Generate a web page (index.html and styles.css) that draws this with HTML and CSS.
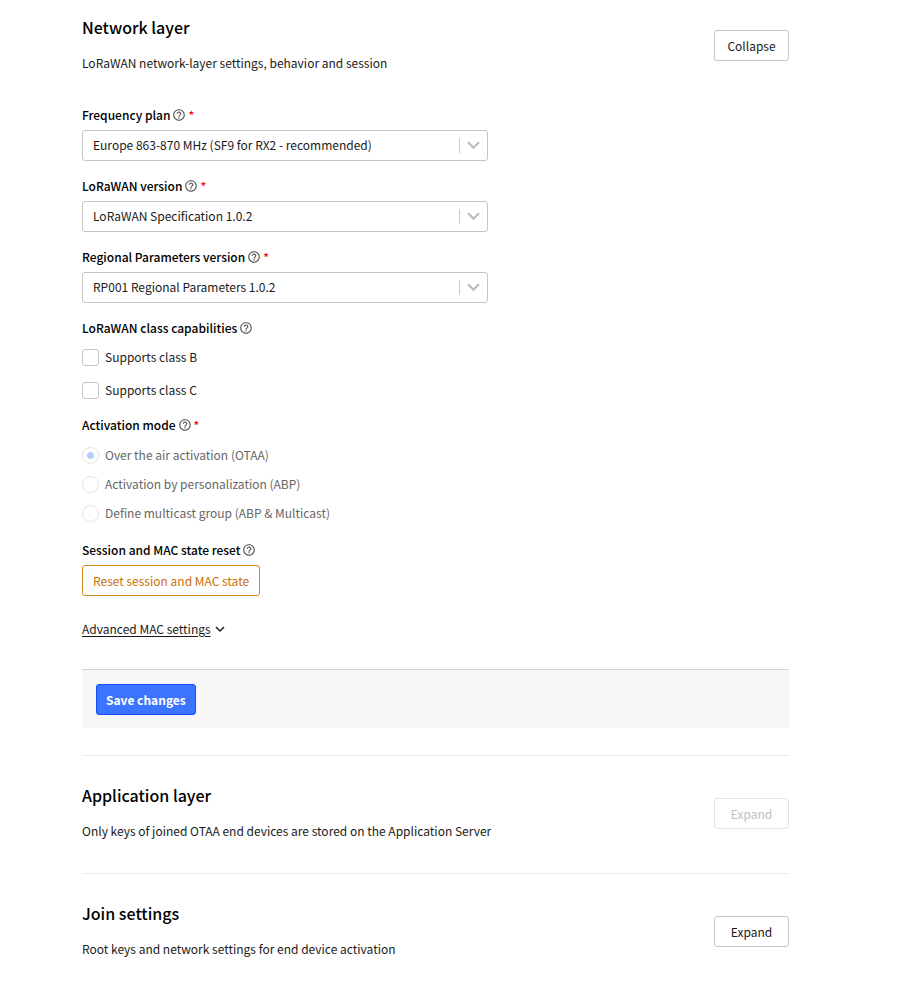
FILE: index.html
```
<!DOCTYPE html>
<html lang="en">
<head>
<meta charset="utf-8">
<meta name="viewport" content="width=device-width, initial-scale=1">
<title>End device settings</title>
<link rel="stylesheet" href="styles.css">
</head>
<body>
<svg class="sprite" aria-hidden="true">
  <symbol id="help" viewBox="0 0 24 24"><path fill="currentColor" d="M11 18h2v-2h-2v2zm1-16C6.480 2 2 6.480 2 12s4.480 10 10 10 10-4.480 10-10S17.520 2 12 2zm0 18c-4.410 0-8-3.590-8-8s3.590-8 8-8 8 3.590 8 8-3.590 8-8 8zm0-14c-2.210 0-4 1.790-4 4h2c0-1.100.9-2 2-2s2 .9 2 2c0 2-3 1.750-3 5h2c0-2.250 3-2.500 3-5 0-2.210-1.790-4-4-4z"/></symbol>
  <symbol id="chevron" viewBox="0 0 12 12"><path d="M1.500 3.500 6 8l4.500-4.500" fill="none" stroke="currentColor" stroke-width="2" stroke-linecap="round"/></symbol>
  <symbol id="expand" viewBox="0 0 12 12"><path d="M2 4l4 4 4-4" fill="none" stroke="currentColor" stroke-width="1.500"/></symbol>
</svg>
<main class="page">
  <section class="section">
    <header class="section-header">
      <div class="section-text">
        <h2 class="title">Network layer</h2>
        <p class="description">LoRaWAN network-layer settings, behavior and session</p>
      </div>
      <button class="button" type="button">Collapse</button>
    </header>
    <form class="form">
      <div class="fields">
        <div class="field">
          <label class="label" for="plan">Frequency plan<svg class="help"><use href="#help"/></svg><span class="required">*</span></label>
          <div class="select-box">
            <select class="select" id="plan"><option>Europe 863-870 MHz (SF9 for RX2 - recommended)</option></select>
            <span class="indicator"><svg class="chevron"><use href="#chevron"/></svg></span>
          </div>
        </div>
        <div class="field">
          <label class="label" for="version">LoRaWAN version<svg class="help"><use href="#help"/></svg><span class="required">*</span></label>
          <div class="select-box">
            <select class="select" id="version"><option>LoRaWAN Specification 1.0.2</option></select>
            <span class="indicator"><svg class="chevron"><use href="#chevron"/></svg></span>
          </div>
        </div>
        <div class="field">
          <label class="label" for="regional">Regional Parameters version<svg class="help"><use href="#help"/></svg><span class="required">*</span></label>
          <div class="select-box">
            <select class="select" id="regional"><option>RP001 Regional Parameters 1.0.2</option></select>
            <span class="indicator"><svg class="chevron"><use href="#chevron"/></svg></span>
          </div>
        </div>
        <fieldset class="group">
          <legend class="label">LoRaWAN class capabilities<svg class="help"><use href="#help"/></svg></legend>
          <div class="checks">
            <label class="choice"><input class="checkbox" type="checkbox">Supports class B</label>
            <label class="choice"><input class="checkbox" type="checkbox">Supports class C</label>
          </div>
        </fieldset>
        <fieldset class="group" disabled>
          <legend class="label">Activation mode<svg class="help"><use href="#help"/></svg><span class="required">*</span></legend>
          <div class="radios">
            <label class="choice choice-disabled"><input class="radio" type="radio" name="mode" checked>Over the air activation (OTAA)</label>
            <label class="choice choice-disabled"><input class="radio" type="radio" name="mode">Activation by personalization (ABP)</label>
            <label class="choice choice-disabled"><input class="radio" type="radio" name="mode">Define multicast group (ABP &amp; Multicast)</label>
          </div>
        </fieldset>
        <div class="field">
          <label class="label" for="reset">Session and MAC state reset<svg class="help"><use href="#help"/></svg></label>
          <button class="button button-warning" id="reset" type="button">Reset session and MAC state</button>
        </div>
      </div>
      <button class="advanced" type="button"><span class="advanced-text">Advanced MAC settings</span><svg class="advanced-icon"><use href="#expand"/></svg></button>
      <div class="submit-bar"><button class="button button-primary" type="submit">Save changes</button></div>
    </form>
  </section>
  <section class="section">
    <header class="section-header">
      <div class="section-text">
        <h2 class="title">Application layer</h2>
        <p class="description">Only keys of joined OTAA end devices are stored on the Application Server</p>
      </div>
      <button class="button" type="button" disabled>Expand</button>
    </header>
  </section>
  <section class="section">
    <header class="section-header">
      <div class="section-text">
        <h2 class="title">Join settings</h2>
        <p class="description">Root keys and network settings for end device activation</p>
      </div>
      <button class="button" type="button">Expand</button>
    </header>
  </section>
</main>
</body>
</html>
```
FILE: styles.css
```
* { box-sizing: border-box; }
body {
  margin: 0;
  background: #fff;
  color: #1a1a1a;
  font: 12px/20px "Noto Sans CJK SC", "Noto Sans", sans-serif;
}
button, select, input { font: inherit; color: inherit; margin: 0; }
.sprite { position: absolute; width: 0; height: 0; }
.page { padding: 0 135px 0 82px; }
.section { padding: 15px 0 27px; }
.section + .section { padding: 27px 0 29px; border-top: 1px solid #ebebeb; }
.section-header { display: flex; justify-content: space-between; align-items: center; gap: 16px; }
.section-text { display: grid; gap: 14px; padding-bottom: 3px; }
.title { margin: 0; font-size: 16px; line-height: 24px; font-weight: 500; color: #000; }
.description { margin: 0; }
.button {
  min-width: 75px;
  height: 31px;
  padding: 0 10px;
  border: 1px solid #c5c5c5;
  border-radius: 3px;
  background: #fff;
  line-height: 20px;
}
.button:disabled { color: #c0c0c0; border-color: #e2e2e2; }
.button-warning { justify-self: start; border-color: #d28a1c; color: #c96f08; }
.button-primary { padding: 0 9px; background: #3d74ff; border-color: #0f4fff; color: #fff; font-weight: 700; }
.form { padding-top: 29px; }
.fields { display: grid; gap: 15px; max-width: 406px; }
.field { display: grid; gap: 5px; }
.label { display: flex; align-items: center; padding: 0; font-weight: 500; color: #000; }
.help { width: 14px; height: 14px; margin-left: 2px; color: #555; }
.required { margin-left: 2px; color: #f00; }
.select-box { display: grid; align-items: center; }
.select {
  grid-area: 1 / 1;
  appearance: none;
  width: 100%;
  height: 31px;
  padding: 0 36px 1px 10px;
  border: 1px solid #c5c5c5;
  border-radius: 3px;
  background: #fff;
}
.indicator {
  grid-area: 1 / 1;
  justify-self: end;
  display: flex;
  padding: 1px 8px 1px 7px;
  border-left: 1px solid #ccc;
  color: #bbb;
  pointer-events: none;
}
.chevron { width: 13px; height: 13px; }
.group { display: grid; margin: 0; padding: 0; border: 0; min-width: 0; }
.checks { display: grid; gap: 13px; padding-top: 9px; }
.radios { display: grid; gap: 9px; padding: 10px 0 2px; }
.choice { display: flex; align-items: center; gap: 6px; }
.choice-disabled { color: #666; }
.checkbox, .radio { appearance: none; width: 17px; height: 17px; border: 1px solid #c5c5c5; background: #fff; }
.checkbox { border-radius: 3px; }
.radio { border-radius: 50%; border-color: #e2e2e2; }
.radio:checked { background: radial-gradient(circle, #b5cafd 3px, #fff 4px); }
.advanced {
  display: flex;
  align-items: center;
  gap: 3px;
  margin-top: 23px;
  padding: 0;
  border: 0;
  background: none;
}
.advanced-text { text-decoration: underline; text-underline-offset: 2px; }
.advanced-icon { width: 12px; height: 12px; }
.submit-bar { margin-top: 30px; padding: 14px 14px 13px; border-top: 1px solid #d3d3d3; background: #f7f7f7; }
```
